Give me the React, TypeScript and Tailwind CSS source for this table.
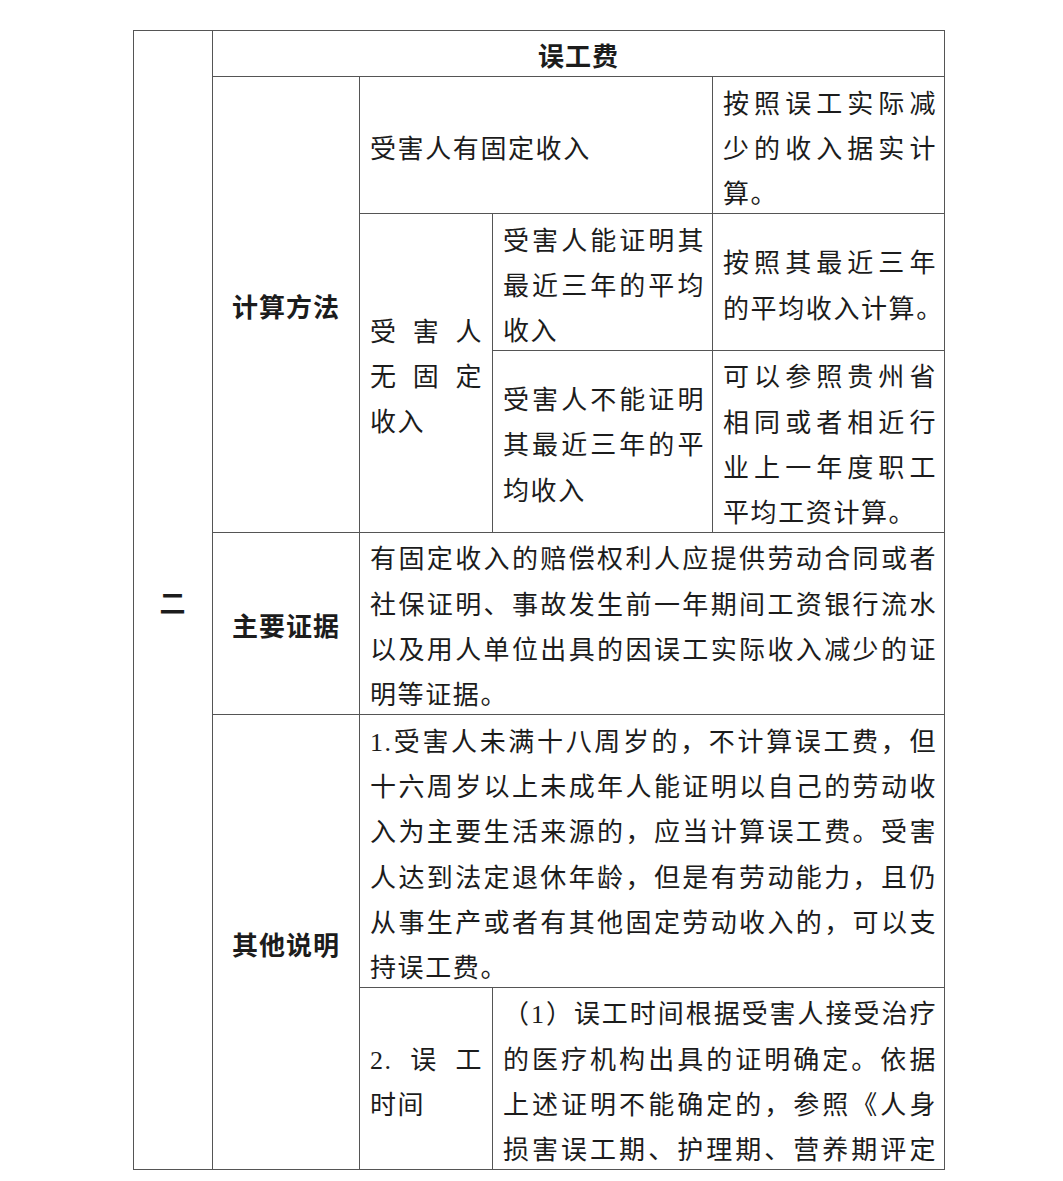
const font = "font-['Liberation_Serif','Noto_Sans_CJK_SC',serif]";

interface LinesProps {
  lines: string[];
  justifyAll?: boolean;
}

// each line is set by hand so the breaks match the printed form
function Lines({ lines, justifyAll }: LinesProps) {
  return (
    <div className="w-full">
      {lines.map((line, i) => {
        const last = i === lines.length - 1;
        return (
          <div
            key={i}
            className={
              last && !justifyAll
                ? "whitespace-nowrap"
                : "whitespace-nowrap text-justify [text-align-last:justify]"
            }
          >
            {line}
          </div>
        );
      })}
    </div>
  );
}

function Cell({
  className = "",
  children,
}: {
  className?: string;
  children: React.ReactNode;
}) {
  return (
    <div className={`flex items-center bg-white pl-[10px] pr-[7px] pt-[9px] ${className}`}>
      {children}
    </div>
  );
}

function Label({ className = "", children }: { className?: string; children: React.ReactNode }) {
  return (
    <div
      className={`flex items-center justify-center bg-white pt-[9px] font-bold tracking-[1px] ${className}`}
    >
      {children}
    </div>
  );
}

export default function App() {
  return (
    <div lang="zh-CN" className={`min-h-screen bg-white pl-[133px] pt-[30px] ${font}`}>
      <div className="grid w-[812px] grid-cols-[78px_146px_132px_219px_231px] grid-rows-[45px_136px_136px_181px_181px_272px_181px] gap-px bg-[#555] p-px text-[26px] leading-[45.33px] tracking-[1.6px] text-[#1c1c1c]">
        <Label className="col-start-1 row-start-1 row-span-7">二</Label>

        <Label className="col-start-2 col-span-4 row-start-1 pt-[6px]">误工费</Label>

        <Label className="col-start-2 row-start-2 row-span-3">计算方法</Label>
        <Cell className="col-start-3 col-span-2 row-start-2">
          <Lines lines={["受害人有固定收入"]} />
        </Cell>
        <Cell className="col-start-5 row-start-2">
          <Lines lines={["按照误工实际减", "少的收入据实计", "算。"]} />
        </Cell>

        <Cell className="col-start-3 row-start-3 row-span-2 pr-[9px]">
          <Lines lines={["受害人", "无固定", "收入"]} />
        </Cell>
        <Cell className="col-start-4 row-start-3">
          <Lines lines={["受害人能证明其", "最近三年的平均", "收入"]} />
        </Cell>
        <Cell className="col-start-5 row-start-3">
          <Lines lines={["按照其最近三年", "的平均收入计算。"]} />
        </Cell>
        <Cell className="col-start-4 row-start-4">
          <Lines lines={["受害人不能证明", "其最近三年的平", "均收入"]} />
        </Cell>
        <Cell className="col-start-5 row-start-4">
          <Lines
            lines={["可以参照贵州省", "相同或者相近行", "业上一年度职工", "平均工资计算。"]}
          />
        </Cell>

        <Label className="col-start-2 row-start-5">主要证据</Label>
        <Cell className="col-start-3 col-span-3 row-start-5">
          <Lines
            lines={[
              "有固定收入的赔偿权利人应提供劳动合同或者",
              "社保证明、事故发生前一年期间工资银行流水",
              "以及用人单位出具的因误工实际收入减少的证",
              "明等证据。",
            ]}
          />
        </Cell>

        <Label className="col-start-2 row-start-6 row-span-2">其他说明</Label>
        <Cell className="col-start-3 col-span-3 row-start-6">
          <Lines
            lines={[
              "1.受害人未满十八周岁的，不计算误工费，但",
              "十六周岁以上未成年人能证明以自己的劳动收",
              "入为主要生活来源的，应当计算误工费。受害",
              "人达到法定退休年龄，但是有劳动能力，且仍",
              "从事生产或者有其他固定劳动收入的，可以支",
              "持误工费。",
            ]}
          />
        </Cell>
        <Cell className="col-start-3 row-start-7 pr-[9px]">
          <Lines lines={["2.误工", "时间"]} />
        </Cell>
        <Cell className="col-start-4 col-span-2 row-start-7">
          <Lines
            justifyAll
            lines={[
              "（1）误工时间根据受害人接受治疗",
              "的医疗机构出具的证明确定。依据",
              "上述证明不能确定的，参照《人身",
              "损害误工期、护理期、营养期评定",
            ]}
          />
        </Cell>
      </div>
    </div>
  );
}
